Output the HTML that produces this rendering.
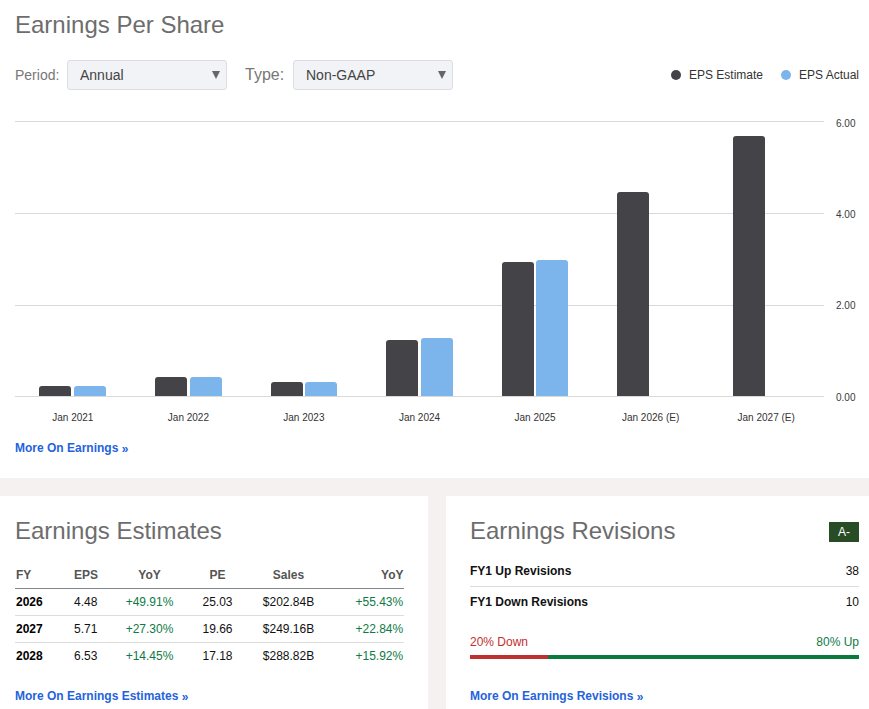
<!DOCTYPE html>
<html><head><meta charset="utf-8"><style>
html,body{margin:0;padding:0;background:#fff;}
body{width:869px;height:709px;position:relative;overflow:hidden;font-family:"Liberation Sans",sans-serif;}
.t{position:absolute;white-space:nowrap;}
.r{position:absolute;}
.sel{position:absolute;background:#f2f3f6;border:1px solid #dcdde0;border-radius:3px;}
</style></head><body>
<div class="t" style="left:15px;top:12.5px;font-size:24px;line-height:24px;color:#6d6d6d;font-weight:normal;">Earnings Per Share</div>
<div class="t" style="left:15px;top:68.0px;font-size:14px;line-height:14px;color:#777;font-weight:normal;">Period:</div>
<div class="sel" style="left:67px;top:60px;width:158px;height:28px;"></div>
<div class="t" style="left:80px;top:68.0px;font-size:14px;line-height:14px;color:#444;font-weight:normal;">Annual</div>
<svg class="r" style="left:211px;top:70px" width="10" height="10"><path d="M1 1 L9 1 L5 9 Z" fill="#666"/></svg>
<div class="t" style="left:245px;top:66.5px;font-size:16px;line-height:16px;color:#777;font-weight:normal;">Type:</div>
<div class="sel" style="left:293px;top:60px;width:158px;height:28px;"></div>
<div class="t" style="left:306px;top:68.0px;font-size:14px;line-height:14px;color:#444;font-weight:normal;">Non-GAAP</div>
<svg class="r" style="left:437px;top:70px" width="10" height="10"><path d="M1 1 L9 1 L5 9 Z" fill="#666"/></svg>
<div class="r" style="left:671px;top:70px;width:10px;height:10px;border-radius:50%;background:#434348"></div>
<div class="t" style="left:689px;top:69.0px;font-size:12px;line-height:12px;color:#333;font-weight:normal;">EPS Estimate</div>
<div class="r" style="left:781px;top:70px;width:10px;height:10px;border-radius:50%;background:#7cb5ec"></div>
<div class="t" style="left:799px;top:69.0px;font-size:12px;line-height:12px;color:#333;font-weight:normal;">EPS Actual</div>
<div class="r" style="left:15px;top:121px;width:809px;height:1px;background:#d9d9d9;"></div>
<div class="r" style="left:15px;top:213px;width:809px;height:1px;background:#d9d9d9;"></div>
<div class="r" style="left:15px;top:305px;width:809px;height:1px;background:#d9d9d9;"></div>
<div class="r" style="left:15px;top:396px;width:809px;height:1px;background:#d9d9d9;"></div>
<div class="t" style="left:836px;top:118.5px;font-size:10px;line-height:10px;color:#3a3a3a;font-weight:normal;">6.00</div>
<div class="t" style="left:836px;top:209.5px;font-size:10px;line-height:10px;color:#3a3a3a;font-weight:normal;">4.00</div>
<div class="t" style="left:836px;top:300.5px;font-size:10px;line-height:10px;color:#3a3a3a;font-weight:normal;">2.00</div>
<div class="t" style="left:836px;top:392.5px;font-size:10px;line-height:10px;color:#3a3a3a;font-weight:normal;">0.00</div>
<div class="t" style="left:-227.2px;width:600px;text-align:center;top:412.5px;font-size:10px;line-height:10px;color:#333;font-weight:normal;">Jan 2021</div>
<div class="r" style="left:39px;top:386px;width:32px;height:10px;background:#434348;border-radius:3px 3px 0 0;"></div>
<div class="r" style="left:74px;top:386px;width:32px;height:10px;background:#7cb5ec;border-radius:3px 3px 0 0;"></div>
<div class="t" style="left:-111.6px;width:600px;text-align:center;top:412.5px;font-size:10px;line-height:10px;color:#333;font-weight:normal;">Jan 2022</div>
<div class="r" style="left:155px;top:377px;width:32px;height:19px;background:#434348;border-radius:3px 3px 0 0;"></div>
<div class="r" style="left:190px;top:377px;width:32px;height:19px;background:#7cb5ec;border-radius:3px 3px 0 0;"></div>
<div class="t" style="left:3.8999999999999773px;width:600px;text-align:center;top:412.5px;font-size:10px;line-height:10px;color:#333;font-weight:normal;">Jan 2023</div>
<div class="r" style="left:271px;top:382px;width:32px;height:14px;background:#434348;border-radius:3px 3px 0 0;"></div>
<div class="r" style="left:305px;top:382px;width:32px;height:14px;background:#7cb5ec;border-radius:3px 3px 0 0;"></div>
<div class="t" style="left:119.5px;width:600px;text-align:center;top:412.5px;font-size:10px;line-height:10px;color:#333;font-weight:normal;">Jan 2024</div>
<div class="r" style="left:386px;top:340px;width:32px;height:56px;background:#434348;border-radius:3px 3px 0 0;"></div>
<div class="r" style="left:421px;top:338px;width:32px;height:58px;background:#7cb5ec;border-radius:3px 3px 0 0;"></div>
<div class="t" style="left:235.10000000000002px;width:600px;text-align:center;top:412.5px;font-size:10px;line-height:10px;color:#333;font-weight:normal;">Jan 2025</div>
<div class="r" style="left:502px;top:262px;width:32px;height:134px;background:#434348;border-radius:3px 3px 0 0;"></div>
<div class="r" style="left:536px;top:260px;width:32px;height:136px;background:#7cb5ec;border-radius:3px 3px 0 0;"></div>
<div class="t" style="left:350.6px;width:600px;text-align:center;top:412.5px;font-size:10px;line-height:10px;color:#333;font-weight:normal;">Jan 2026 (E)</div>
<div class="r" style="left:617px;top:192px;width:32px;height:204px;background:#434348;border-radius:3px 3px 0 0;"></div>
<div class="t" style="left:466.20000000000005px;width:600px;text-align:center;top:412.5px;font-size:10px;line-height:10px;color:#333;font-weight:normal;">Jan 2027 (E)</div>
<div class="r" style="left:733px;top:136px;width:32px;height:260px;background:#434348;border-radius:3px 3px 0 0;"></div>
<div class="t" style="left:15px;top:442.0px;font-size:12px;line-height:12px;color:#2563dc;font-weight:bold;">More On Earnings <span style="position:relative;top:1px">&raquo;</span></div>
<div class="r" style="left:0px;top:478px;width:869px;height:231px;background:#f4f1f0;"></div>
<div class="r" style="left:0px;top:496px;width:428px;height:213px;background:#fff;"></div>
<div class="r" style="left:446px;top:496px;width:423px;height:213px;background:#fff;"></div>
<div class="t" style="left:15px;top:518.5px;font-size:24px;line-height:24px;color:#6d6d6d;font-weight:normal;">Earnings Estimates</div>
<div class="t" style="left:16px;top:569.0px;font-size:12px;line-height:12px;color:#555;font-weight:bold;">FY</div>
<div class="t" style="left:74px;top:569.0px;font-size:12px;line-height:12px;color:#555;font-weight:bold;">EPS</div>
<div class="t" style="left:-150.5px;width:600px;text-align:center;top:569.0px;font-size:12px;line-height:12px;color:#555;font-weight:bold;">YoY</div>
<div class="t" style="left:-82.5px;width:600px;text-align:center;top:569.0px;font-size:12px;line-height:12px;color:#555;font-weight:bold;">PE</div>
<div class="t" style="left:-11.5px;width:600px;text-align:center;top:569.0px;font-size:12px;line-height:12px;color:#555;font-weight:bold;">Sales</div>
<div class="t" style="right:465.5px;text-align:right;top:569.0px;font-size:12px;line-height:12px;color:#555;font-weight:bold;">YoY</div>
<div class="r" style="left:15px;top:588px;width:389px;height:1px;background:#80868b;"></div>
<div class="t" style="left:16px;top:596.0px;font-size:12px;line-height:12px;color:#000;font-weight:bold;">2026</div>
<div class="t" style="left:74px;top:596.0px;font-size:12px;line-height:12px;color:#111;font-weight:normal;">4.48</div>
<div class="t" style="left:-150.5px;width:600px;text-align:center;top:596.0px;font-size:12px;line-height:12px;color:#0f7a46;font-weight:normal;">+49.91%</div>
<div class="t" style="left:-82.5px;width:600px;text-align:center;top:596.0px;font-size:12px;line-height:12px;color:#111;font-weight:normal;">25.03</div>
<div class="t" style="left:-11.5px;width:600px;text-align:center;top:596.0px;font-size:12px;line-height:12px;color:#111;font-weight:normal;">$202.84B</div>
<div class="t" style="right:465.8px;text-align:right;top:596.0px;font-size:12px;line-height:12px;color:#0f7a46;font-weight:normal;">+55.43%</div>
<div class="r" style="left:15px;top:615px;width:389px;height:1px;background:#ddd;"></div>
<div class="t" style="left:16px;top:623.0px;font-size:12px;line-height:12px;color:#000;font-weight:bold;">2027</div>
<div class="t" style="left:74px;top:623.0px;font-size:12px;line-height:12px;color:#111;font-weight:normal;">5.71</div>
<div class="t" style="left:-150.5px;width:600px;text-align:center;top:623.0px;font-size:12px;line-height:12px;color:#0f7a46;font-weight:normal;">+27.30%</div>
<div class="t" style="left:-82.5px;width:600px;text-align:center;top:623.0px;font-size:12px;line-height:12px;color:#111;font-weight:normal;">19.66</div>
<div class="t" style="left:-11.5px;width:600px;text-align:center;top:623.0px;font-size:12px;line-height:12px;color:#111;font-weight:normal;">$249.16B</div>
<div class="t" style="right:465.8px;text-align:right;top:623.0px;font-size:12px;line-height:12px;color:#0f7a46;font-weight:normal;">+22.84%</div>
<div class="r" style="left:15px;top:642px;width:389px;height:1px;background:#ddd;"></div>
<div class="t" style="left:16px;top:650.0px;font-size:12px;line-height:12px;color:#000;font-weight:bold;">2028</div>
<div class="t" style="left:74px;top:650.0px;font-size:12px;line-height:12px;color:#111;font-weight:normal;">6.53</div>
<div class="t" style="left:-150.5px;width:600px;text-align:center;top:650.0px;font-size:12px;line-height:12px;color:#0f7a46;font-weight:normal;">+14.45%</div>
<div class="t" style="left:-82.5px;width:600px;text-align:center;top:650.0px;font-size:12px;line-height:12px;color:#111;font-weight:normal;">17.18</div>
<div class="t" style="left:-11.5px;width:600px;text-align:center;top:650.0px;font-size:12px;line-height:12px;color:#111;font-weight:normal;">$288.82B</div>
<div class="t" style="right:465.8px;text-align:right;top:650.0px;font-size:12px;line-height:12px;color:#0f7a46;font-weight:normal;">+15.92%</div>
<div class="t" style="left:15px;top:690.0px;font-size:12px;line-height:12px;color:#2563dc;font-weight:bold;">More On Earnings Estimates <span style="position:relative;top:1px">&raquo;</span></div>
<div class="t" style="left:470px;top:518.5px;font-size:24px;line-height:24px;color:#6d6d6d;font-weight:normal;">Earnings Revisions</div>
<div class="r" style="left:829px;top:522px;width:30px;height:20px;background:#284d26;"></div>
<div class="t" style="left:544px;width:600px;text-align:center;top:526.0px;font-size:12px;line-height:12px;color:#fff;font-weight:normal;">A-</div>
<div class="t" style="left:470px;top:565.0px;font-size:12px;line-height:12px;color:#111;font-weight:bold;">FY1 Up Revisions</div>
<div class="t" style="right:10px;text-align:right;top:565.0px;font-size:12px;line-height:12px;color:#111;font-weight:normal;">38</div>
<div class="r" style="left:470px;top:586px;width:389px;height:1px;background:#ddd;"></div>
<div class="t" style="left:470px;top:596.0px;font-size:12px;line-height:12px;color:#111;font-weight:bold;">FY1 Down Revisions</div>
<div class="t" style="right:10px;text-align:right;top:596.0px;font-size:12px;line-height:12px;color:#111;font-weight:normal;">10</div>
<div class="t" style="left:470px;top:636.0px;font-size:12px;line-height:12px;color:#c2302e;font-weight:normal;">20% Down</div>
<div class="t" style="right:10px;text-align:right;top:636.0px;font-size:12px;line-height:12px;color:#0f7a46;font-weight:normal;">80% Up</div>
<div class="r" style="left:470px;top:655px;width:78px;height:4px;background:#bf3030;"></div>
<div class="r" style="left:548px;top:655px;width:311px;height:4px;background:#0b7a3e;"></div>
<div class="t" style="left:470px;top:690.0px;font-size:12px;line-height:12px;color:#2563dc;font-weight:bold;">More On Earnings Revisions <span style="position:relative;top:1px">&raquo;</span></div>
</body></html>
